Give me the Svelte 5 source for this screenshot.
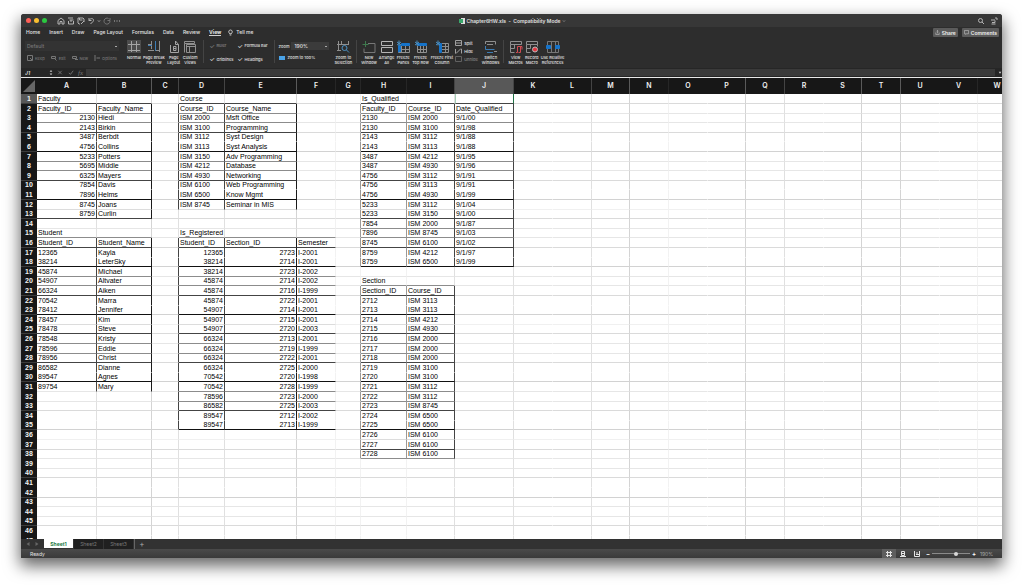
<script>
  let zoom = $state('190%')
  let style = $state('Default')
  let sheet = $state('Sheet1')
  let slider = $state(66)

  const menus = ['Home', 'Insert', 'Draw', 'Page Layout', 'Formulas', 'Data', 'Review', 'View']

  const columns = [
    { name: 'A', size: 'w60', line: 'mid' },
    { name: 'B', size: 'w55', line: 'dark' },
    { name: 'C', size: 'w27', line: 'mid' },
    { name: 'D', size: 'w46', line: 'mid' },
    { name: 'E', size: 'w72', line: 'dark' },
    { name: 'F', size: 'w39', line: 'faint' },
    { name: 'G', size: 'w25', line: 'faint' },
    { name: 'H', size: 'w46', line: 'faint' },
    { name: 'I', size: 'w48', line: 'mid' },
    { name: 'J', size: 'w59', line: 'mid' },
    { name: 'K', size: 'w39', line: 'none' },
    { name: 'L', size: 'w39', line: 'mid' },
    { name: 'M', size: 'w38', line: 'dark' },
    { name: 'N', size: 'w39', line: 'faint' },
    { name: 'O', size: 'w39', line: 'none' },
    { name: 'P', size: 'w38', line: 'dark' },
    { name: 'Q', size: 'w39', line: 'mid' },
    { name: 'R', size: 'w39', line: 'none' },
    { name: 'S', size: 'w38', line: 'dark' },
    { name: 'T', size: 'w39', line: 'dark' },
    { name: 'U', size: 'w39', line: 'none' },
    { name: 'V', size: 'w38', line: 'faint' },
    { name: 'W', size: 'w39', line: 'none' }
  ]

  // weight of the line under each row, repeats every 12 rows
  const weights = ['faint', 'dark', 'mid', 'mid', 'dark', 'none', 'black', 'mid', 'mid', 'dark', 'none', 'black']

  const blocks = [
    {
      title: 'Faculty', row: 1, col: 0, numeric: [0], edges: ['e-dark', 'e-black'],
      head: ['Faculty_ID', 'Faculty_Name'],
      rows: ['2130|Hiedi', '2143|Birkin', '3487|Berbdt', '4756|Collins', '5233|Potters', '5695|Middle', '6325|Mayers', '7854|Davis', '7896|Helms', '8745|Joans', '8759|Curlin']
    },
    {
      title: 'Course', row: 1, col: 3, numeric: [], left: 'e-dark', edges: ['e-dark', 'e-black'],
      head: ['Course_ID', 'Course_Name'],
      rows: ['ISM 2000|Msft Office', 'ISM 3100|Programming', 'ISM 3112|Syst Design', 'ISM 3113|Syst Analysis', 'ISM 3150|Adv Programming', 'ISM 4212|Database', 'ISM 4930|Networking', 'ISM 6100|Web Programming', 'ISM 6500|Know Mgmt', 'ISM 8745|Seminar in MIS']
    },
    {
      title: 'Is_Qualified', row: 1, col: 7, numeric: [], left: 'e-soft', edges: ['e-soft', 'e-dark', 'e-dark'],
      head: ['Faculty_ID', 'Course_ID', 'Date_Qualified'],
      rows: ['2130|ISM 2000|9/1/00', '2130|ISM 3100|9/1/98', '2143|ISM 3112|9/1/88', '2143|ISM 3113|9/1/88', '3487|ISM 4212|9/1/95', '3487|ISM 4930|9/1/96', '4756|ISM 3112|9/1/91', '4756|ISM 3113|9/1/91', '4756|ISM 4930|9/1/99', '5233|ISM 3112|9/1/04', '5233|ISM 3150|9/1/00', '7854|ISM 2000|9/1/87', '7896|ISM 8745|9/1/03', '8745|ISM 6100|9/1/02', '8759|ISM 4212|9/1/97', '8759|ISM 6500|9/1/99']
    },
    {
      title: 'Student', row: 15, col: 0, numeric: [], open: true, edges: ['e-dark', 'e-black'],
      head: ['Student_ID', 'Student_Name'],
      rows: ['12365|Kayla', '38214|LeterSky', '45874|Michael', '54907|Altvater', '66324|Aiken', '70542|Marra', '78412|Jennifer', '78457|Kim', '78478|Steve', '78548|Kristy', '78596|Eddie', '78956|Christ', '86582|Dianne', '89547|Agnes', '89754|Mary']
    },
    {
      title: 'Is_Registered', row: 15, col: 3, numeric: [0, 1], left: 'e-dark', edges: ['e-dark', 'e-black', ''],
      head: ['Student_ID', 'Section_ID', 'Semester'],
      rows: ['12365|2723|I-2001', '38214|2714|I-2001', '38214|2723|I-2002', '45874|2714|I-2002', '45874|2716|I-1999', '45874|2722|I-2001', '54907|2714|I-2001', '54907|2715|I-2001', '54907|2720|I-2003', '66324|2713|I-2001', '66324|2719|I-1999', '66324|2722|I-2001', '66324|2725|I-2000', '70542|2720|I-1998', '70542|2728|I-1999', '78596|2723|I-2000', '86582|2725|I-2003', '89547|2712|I-2002', '89547|2713|I-1999']
    },
    {
      title: 'Section', row: 20, col: 7, numeric: [], left: 'e-soft', edges: ['e-soft', 'e-dark'],
      head: ['Section_ID', 'Course_ID'],
      rows: ['2712|ISM 3113', '2713|ISM 3113', '2714|ISM 4212', '2715|ISM 4930', '2716|ISM 2000', '2717|ISM 2000', '2718|ISM 2000', '2719|ISM 3100', '2720|ISM 3100', '2721|ISM 3112', '2722|ISM 3112', '2723|ISM 8745', '2724|ISM 6500', '2725|ISM 6500', '2726|ISM 6100', '2727|ISM 6100', '2728|ISM 6100']
    }
  ]

  const cells = {}

  function put(row, col, value) {
    const key = row + ':' + col
    cells[key] = { text: '', cls: '', ...cells[key] }
    cells[key].text = value.text ?? cells[key].text
    cells[key].cls += ' ' + value.cls
  }

  for (const b of blocks) {
    b.head.forEach((_, i) => put(b.row, b.col + i, { text: i === 0 ? b.title : '', cls: 'boxed' }))
    const all = [b.head, ...b.rows.map(r => r.split('|'))]
    all.forEach((line, n) => {
      const row = b.row + 1 + n
      const last = n === all.length - 1
      line.forEach((text, i) => {
        let cls = b.edges[i]
        if (!(last && b.open)) cls += ' boxed'
        if (n > 0 && b.numeric.includes(i)) cls += ' num'
        put(row, b.col + i, { text, cls })
      })
      if (b.left) put(row, b.col - 1, { cls: b.left })
    })
  }

  const rowNumbers = Array.from({ length: 47 }, (_, i) => i + 1)

  // each part: [path, stroke, fill]
  const g = '#8f8f8f'
  const blue = '#1673c9'
  const light = '#4a90c4'
  const icons = {
    normal: [['M4.500 1v11M9.500 1v11M1 4.500h12M1 10.500h12', '#a4a4a4']],
    breaks: [['M1 4.500h4M4.500 1v8M9 10.500h4M1 10.500h6M12.500 1v11', g], ['M8.500 1v10M1 5.500h4', '#3d7db5']],
    page: [['M3.500 5v7.500h8V4.500L8.500 1v3.500h3M6.500 6.500v4h2.500v-4zM6.500 8.500h2.500', '#a4a4a4']],
    custom: [['M1.500 1.500h10v2h-10zM1.500 3.500v9M3.500 4.500h9v8h-9zM3.500 6.500h9M6.500 6.500v6', g]],
    zoomsel: [['M2.500 1v10M5.500 1v3M1 4.500h12M1 10.500h4M12.500 1v4', g], ['M11 8a2.500 2.500 0 1 1-5 0a2.500 2.500 0 0 1 5 0M10.500 10l2.500 2.500', light]],
    newwin: [['M6 3.500h7v9h-11v-4', '#777'], ['M3.500 1v6M0.500 4.500h6', '#3f7a4e']],
    arrange: [['M1.500 1.500h11v4h-11zM1.500 7.500h11v5h-11z', '#b4b4b4']],
    panes: [['M5.500 3.500h8v2h-8zM2.500 5.500h2v7h-2z', blue, blue], ['M5.500 6v6.500M9.500 6v6.500M5 9.500h8.500M13.500 6v6.500h-11', g], ['M1 2l4 3M1 5l4-3M3 0.500v5', light]],
    toprow: [['M3.500 3.500h9v2h-9z', blue, blue], ['M3.500 6v6.500h9v-6.500M6.500 6v6.500M9.500 6v6.500M3 9.500h10', g], ['M1 2l4 3M1 5l4-3M3 0.500v5', light]],
    firstcol: [['M4.500 3.500h2v9h-2z', blue, blue], ['M7 3.500h6.500v9h-6.500M10.500 3.500v9M7 6.500h6.500M7 9.500h6.500', g], ['M1 2l4 3M1 5l4-3M3 0.500v5', light]],
    switch: [['M1.500 4v-2.500h10v3M3 4.500h6M10 11.500h3', g], ['M1.500 6v3.500h9M3 12.500h6', '#3d7db5']],
    macros: [['M1.500 1.500h11v3h-11zM1.500 4.500v8h4M5.500 4.500v4M1.500 8.500h4', g], ['M7 12.500h1.500v-6h4.500v3M11.500 6.500v6h-2', '#d14b52']],
    record: [['M1.500 1.500h11v3h-11zM1.500 4.500v8h4M5.500 4.500v4M1.500 8.500h4M12.500 4.500v2', g], ['M12.500 9.500a2.500 2.500 0 1 1-5 0a2.500 2.500 0 0 1 5 0', '#b9b9b9', '#e2353f']],
    relative: [['M1.500 1.500h11v11h-11zM5.500 1.500v11M9.500 1.500v11', '#777'], ['M0.500 5.500h4v3h-4zM9.500 5.500h4v3h-4z', blue, blue]]
  }
</script>

{#snippet tool(name, top, bottom = '', on = false)}
  <button class="tool" class:on>
    <svg viewBox="0 0 14 13">
      {#each icons[name] as [d, stroke, fill]}
        <path {d} {stroke} fill={fill ?? 'none'} />
      {/each}
    </svg>
    <span>{top}</span>
    <span>{bottom}</span>
  </button>
{/snippet}

<div class="window">
  <header class="titlebar">
    <div class="quick">
      <div class="lights"><i class="red"></i><i class="yellow"></i><i class="green"></i></div>
      <svg viewBox="0 0 8 8"><path d="M1 3.500L4 1l3 2.500V7H5V4.500H3V7H1z" /></svg>
      <svg viewBox="0 0 8 8"><path d="M1 1h5M2.500 3h4M1.500 4v3h5V4M4 3v2" /></svg>
      <svg viewBox="0 0 8 8"><path d="M1 1h5l1 1v3M1 1v5l1 1h1M2.500 1v2h3M4 7l3-3" /></svg>
      <svg viewBox="0 0 8 8"><path d="M2 1v2.500h2.500M2 3.500C4 0 8 2 6 4.500L3.500 7" /></svg>
      <svg class="chev" viewBox="0 0 4 8"><path d="M1 3.500l1 1l1-1" /></svg>
      <svg class="dim" viewBox="0 0 8 8"><path d="M5.500 1.500A3 3 0 1 0 7 4M7 1v2.500H4.500" /></svg>
      <svg viewBox="0 0 8 8"><path d="M1 4h1M3.500 4h1M6 4h1" /></svg>
    </div>
    <div class="doc">
      <svg viewBox="0 0 8 8"><path d="M3 1h4v6H3z" fill="#ddd" stroke="none" /><path d="M1 2h4v4H1z" fill="#3aa66b" stroke="none" /></svg>
      <span>Chapter6HW.xls&nbsp; -&nbsp; Compatibility Mode</span>
      <svg class="chev dim" viewBox="0 0 4 8"><path d="M1 3.500l1 1l1-1" /></svg>
    </div>
    <div class="corner">
      <svg viewBox="0 0 8 8"><path d="M5.500 3.500a2 2 0 1 1-4 0a2 2 0 0 1 4 0M5 5l2 2" /></svg>
      <svg viewBox="0 0 8 8"><path d="M1 3h4M2 5.500h3M1.500 7h4M5 1h2v2M5 3.500v2" /></svg>
    </div>
  </header>

  <nav class="menu">
    {#each menus as item}
      <a href="#{item}" class:active={item === 'View'}>{item}</a>
    {/each}
    <a href="#tell" class="tell">
      <svg viewBox="0 0 6 8"><path d="M2 5.500C0 3 1 1 3 1s3 2 1 4.500zM2 7h2" /></svg>
      Tell me
    </a>
    <div class="share">
      <button><svg viewBox="0 0 6 6"><path d="M1 3v2.500h4V3M3 4V0.500M2 1.500l1-1l1 1" /></svg>Share</button>
      <button><svg viewBox="0 0 6 6"><path d="M0.500 0.500h5v4H3l-1 1v-1H0.500z" /></svg>Comments</button>
    </div>
  </nav>

  <div class="ribbon">
    <div class="views">
      <select bind:value={style} aria-label="Sheet view"><option>Default</option></select>
      <div class="viewrow">
        <button><svg viewBox="0 0 6 6"><path d="M0.500 0.500h5v5h-5zM3 3l2 2" /></svg>Keep</button>
        <button><svg viewBox="0 0 6 6"><path d="M0.500 1.500h4v2h-4zM3 3l2.500 2.500" /></svg>Exit</button>
        <button><svg viewBox="0 0 6 6"><path d="M0.500 1.500h4v2h-4zM3 4.500h3" /></svg>New</button>
        <button><svg viewBox="0 0 6 6"><path d="M1 0v6M2.500 3H6" /></svg>Options</button>
      </div>
    </div>
    <div class="tools">
      {@render tool('normal', 'Normal', '', true)}
      {@render tool('breaks', 'Page Break', 'Preview')}
      {@render tool('page', 'Page', 'Layout')}
      {@render tool('custom', 'Custom', 'Views')}
    </div>
    <div class="checks">
      <label class="off"><input type="checkbox" checked disabled />Ruler</label>
      <label><input type="checkbox" checked />Formula Bar</label>
      <label><input type="checkbox" checked />Gridlines</label>
      <label><input type="checkbox" checked />Headings</label>
    </div>
    <div class="zoom">
      <label>Zoom
        <select bind:value={zoom}><option>190%</option><option>100%</option></select>
      </label>
      <button onclick={() => (zoom = '100%')}><i></i>Zoom to 100%</button>
    </div>
    <div class="tools">
      {@render tool('zoomsel', 'Zoom to', 'Selection')}
    </div>
    <div class="tools ruled">
      {@render tool('newwin', 'New', 'Window')}
      {@render tool('arrange', 'Arrange', 'All')}
      {@render tool('panes', 'Freeze', 'Panes')}
      {@render tool('toprow', 'Freeze', 'Top Row')}
      {@render tool('firstcol', 'Freeze First', 'Column')}
      <div class="stack">
        <button><svg viewBox="0 0 7 6"><path d="M0.500 0.500h6v5h-6zM0.500 3h6" /></svg>Split</button>
        <button><svg viewBox="0 0 7 6"><path d="M0.500 1v4.500M1 5.500l5-5M6.500 1v4.500" /></svg>Hide</button>
        <button class="off"><svg viewBox="0 0 7 6"><path d="M0.500 0.500h6v5h-6z" /></svg>Unhide</button>
      </div>
      {@render tool('switch', 'Switch', 'Windows')}
    </div>
    <div class="tools ruled">
      {@render tool('macros', 'View', 'Macros')}
      {@render tool('record', 'Record', 'Macro')}
      {@render tool('relative', 'Use Relative', 'References')}
    </div>
  </div>

  <div class="formula">
    <input class="name" value="J1" aria-label="Name box" />
    <svg class="step" viewBox="0 0 4 8"><path d="M0.500 3L2 1l1.500 2zM0.500 5L2 7l1.500-2z" /></svg>
    <svg viewBox="0 0 8 8"><path d="M2 2l4 4M6 2L2 6" /></svg>
    <svg viewBox="0 0 8 8"><path d="M1.500 4.500l2 1.500l3-4" /></svg>
    <em>fx</em>
    <input class="content" aria-label="Formula" />
    <svg class="drop" viewBox="0 0 4 8"><path d="M0.500 3h3L2 5.500z" /></svg>
  </div>

  <main class="sheet">
    <table>
      <thead>
        <tr>
          <th class="corner-cell w16"><svg viewBox="0 0 14 13"><path d="M13 0v12H1z" /></svg></th>
          {#each columns as c}
            <th class="{c.size} h-{c.line}" class:picked={c.name === 'J'}>{c.name}</th>
          {/each}
        </tr>
      </thead>
      <tbody>
        {#each rowNumbers as r}
          <tr class="b-{weights[r % 12]}">
            <th class:picked={r === 1}>{r}</th>
            {#each columns as c, i}
              {@const cell = cells[r + ':' + i]}
              <td class="v-{c.line} {cell?.cls ?? ''}" class:selected={r === 1 && c.name === 'J'}>{cell?.text ?? ''}</td>
            {/each}
          </tr>
        {/each}
      </tbody>
    </table>
  </main>

  <div class="tabs">
    <button class="arrow" aria-label="Previous sheet"><svg viewBox="0 0 4 4"><path d="M3.500 0v4L0.500 2z" /></svg></button>
    <button class="arrow" aria-label="Next sheet"><svg viewBox="0 0 4 4"><path d="M0.500 0v4L3.500 2z" /></svg></button>
    {#each ['Sheet1', 'Sheet2', 'Sheet3'] as s}
      <button class="tab" class:current={sheet === s} onclick={() => (sheet = s)}>{s}</button>
    {/each}
    <button class="add">+</button>
  </div>

  <footer class="status">
    <span class="ready">Ready</span>
    <button class="mode on" aria-label="Normal view"><svg viewBox="0 0 6 6"><path d="M1.500 0v6M4.500 0v6M0 1.500h6M0 4.500h6" /></svg></button>
    <button class="mode" aria-label="Page layout view"><svg viewBox="0 0 6 6"><path d="M1.500 0.500h3v4h-3zM0 5.500h6M1.500 2.500h3" /></svg></button>
    <button class="mode" aria-label="Page break view"><svg viewBox="0 0 6 6"><path d="M0.500 0v5.500h5V0M3 1v2M2 3.500h3" /></svg></button>
    <button class="sign">−</button>
    <input type="range" min="0" max="100" bind:value={slider} aria-label="Zoom level" />
    <button class="sign">+</button>
    <span class="level">190%</span>
  </footer>
</div>

<style>
  :global(body) {
    background: #fff;
    margin: 0;
  }

  .window {
    box-sizing: border-box;
    height: calc(100vh - 42px);
    margin: 14px 22px 28px 21px;
    display: flex;
    flex-direction: column;
    overflow: hidden;
    border-radius: 3px 3px 1px 1px;
    background: #2d2d2d;
    color: #e4e4e4;
    font-family: Inter, 'Liberation Sans', sans-serif;
    font-size: 5px;
    line-height: 6px;
    box-shadow: 0 7px 16px 1px rgba(0, 0, 0, 0.6);
  }

  button,
  input,
  select {
    box-sizing: border-box;
    margin: 0;
    padding: 0;
    border: none;
    background: none;
    color: inherit;
    font: inherit;
    appearance: none;
  }

  svg {
    display: block;
    flex: none;
    fill: none;
    stroke: currentColor;
  }

  .titlebar {
    height: 13px;
    flex: none;
    display: grid;
    grid-template-columns: 1fr auto 1fr;
    align-items: center;
    background: #373737;
    color: #b4b4b4;
  }

  .titlebar svg {
    width: 8px;
    height: 8px;
  }

  .titlebar svg.chev {
    width: 4px;
  }

  .quick {
    display: flex;
    align-items: center;
    gap: 2px;
    padding-left: 5px;
  }

  .lights {
    display: flex;
    gap: 3px;
    margin-right: 8px;
  }

  .lights i {
    width: 5px;
    height: 5px;
    border-radius: 50%;
  }

  .red { background: #ff5f57; }
  .yellow { background: #f8be30; }
  .green { background: #2bc840; }

  .dim {
    opacity: 0.5;
  }

  .doc {
    display: flex;
    align-items: center;
    gap: 1px;
    color: #e0e0e0;
    font-weight: 600;
  }

  .corner {
    display: flex;
    justify-content: flex-end;
    gap: 5px;
    padding-right: 4px;
  }

  .menu {
    height: 11px;
    flex: none;
    display: flex;
    align-items: center;
    gap: 9px;
    padding: 0 3px 0 5px;
    font-weight: 500;
  }

  .menu a {
    color: inherit;
    text-decoration: none;
    border-bottom: 1px solid transparent;
  }

  .menu a.active {
    font-weight: 700;
    border-bottom-color: #d0d0d0;
  }

  .menu .tell {
    display: flex;
    gap: 3px;
    margin-left: -2px;
  }

  .tell svg {
    width: 5px;
    height: 7px;
  }

  .share {
    margin-left: auto;
    display: flex;
    gap: 4px;
  }

  .share button {
    display: flex;
    align-items: center;
    gap: 2px;
    height: 9px;
    padding: 0 2px;
    border-radius: 1px;
    background: #5b5b5b;
    color: #f0f0f0;
    font-weight: 600;
  }

  .share svg {
    width: 5px;
    height: 5px;
    color: #aaa;
  }

  .ribbon {
    height: 30px;
    flex: none;
    display: flex;
    align-items: flex-start;
    padding-left: 4px;
    font-size: 4px;
    line-height: 5px;
    font-weight: 500;
  }

  .views {
    width: 94px;
    margin-right: 8px;
    color: #777;
  }

  .views select {
    width: 100%;
    height: 10px;
    margin-top: 3px;
    padding-left: 2px;
    background: #333;
    font-size: 5px;
    line-height: 10px;
  }

  .viewrow {
    display: flex;
    justify-content: space-between;
    padding: 4px 2px 0 2px;
  }

  .viewrow button {
    display: flex;
    align-items: center;
    gap: 2px;
  }

  .viewrow svg {
    width: 6px;
    height: 6px;
  }

  .tools {
    display: flex;
    gap: 2px;
    padding-top: 2px;
  }

  .ruled {
    height: 23px;
    margin: 2px 0 0 4px;
    padding: 0 0 0 4px;
    border-left: 1px solid #444;
  }

  .tool {
    display: flex;
    flex-direction: column;
    align-items: center;
    white-space: nowrap;
  }

  .tool svg {
    width: 14px;
    height: 13px;
    margin-bottom: 2px;
  }

  .tool.on svg {
    background: #4c4c4c;
  }

  .tool span {
    min-height: 5px;
  }

  .stack {
    display: flex;
    flex-direction: column;
    gap: 2px;
    padding-right: 2px;
  }

  .stack button {
    display: flex;
    align-items: center;
    gap: 2px;
  }

  .stack svg {
    width: 7px;
    height: 6px;
    color: #a0a0a0;
  }

  .off {
    opacity: 0.45;
  }

  .checks {
    display: grid;
    grid-template-columns: 24px auto;
    gap: 7px 4px;
    height: 20px;
    margin: 2px 0 0 5px;
    padding: 3px 6px 0 6px;
    border-left: 1px solid #444;
    border-right: 1px solid #444;
  }

  .checks label {
    display: flex;
    align-items: center;
    gap: 3px;
    height: 5px;
    white-space: nowrap;
  }

  .checks input {
    width: 4px;
    height: 4px;
  }

  .checks input:checked::before {
    content: '✓';
    display: block;
    font-size: 6px;
    line-height: 4px;
  }

  .zoom {
    display: flex;
    flex-direction: column;
    gap: 5px;
    padding: 4px 5px 0 4px;
  }

  .zoom label {
    display: flex;
    align-items: center;
    gap: 2px;
  }

  .zoom select {
    width: 38px;
    height: 8px;
    padding-left: 3px;
    background: #3b3b3b;
    font-size: 5px;
    line-height: 8px;
  }

  .views select,
  .zoom select {
    background-image: linear-gradient(#aaa, #aaa);
    background-size: 2px 1px;
    background-position: right 2px center;
    background-repeat: no-repeat;
  }

  .zoom button {
    display: flex;
    align-items: center;
    gap: 3px;
  }

  .zoom i {
    width: 6px;
    height: 4px;
    background: #4aa3e8;
  }

  .formula {
    height: 9px;
    flex: none;
    display: flex;
    align-items: center;
    gap: 3px;
    padding-left: 4px;
    background: #262626;
    border-bottom: 1px solid #e8e8e8;
    color: #777;
  }

  .formula svg {
    width: 8px;
    height: 7px;
  }

  .formula .step,
  .formula .drop {
    width: 4px;
    stroke: none;
    fill: #ccc;
  }

  .name {
    width: 21px;
    color: #e4e4e4;
    font-weight: 600;
    font-style: italic;
  }

  .formula em {
    font-family: 'Liberation Serif', serif;
    font-size: 7px;
  }

  .content {
    flex: 1;
    height: 7px;
    background: #3a3a3a;
    color: #e4e4e4;
  }

  .sheet {
    flex: 1;
    min-height: 0;
    overflow: hidden;
    background: #fff;
    color: #000;
  }

  table {
    width: 995px;
    table-layout: fixed;
    border-collapse: separate;
    border-spacing: 0;
    font-family: 'Liberation Sans', Arial, sans-serif;
    font-size: 7px;
    line-height: 8px;
  }

  th,
  td {
    box-sizing: border-box;
    padding: 0 1px;
    white-space: nowrap;
  }

  th {
    background: #171717;
    color: #f2f2f2;
    text-align: center;
  }

  thead th {
    height: 16px;
    border-right: 1px solid #171717;
    font-family: Inter, sans-serif;
    font-weight: 600;
  }

  thead .h-dark { border-right-color: #5a5a5a; }
  thead .h-mid { border-right-color: #444; }
  thead .h-faint { border-right-color: #262626; }

  .corner-cell svg {
    width: 14px;
    height: 13px;
    fill: #666;
    stroke: none;
  }

  tbody tr { height: 10px; }
  tbody tr:nth-child(5n + 3),
  tbody tr:nth-child(5n) { height: 9px; }

  tbody th {
    border-bottom: 1px solid #171717;
  }

  tbody .b-black th,
  tbody .b-dark th { border-bottom-color: #3c3c3c; }

  th.picked {
    background: #585858;
  }

  td {
    border-right: 1px solid #fff;
    border-bottom: 1px solid #fff;
  }

  .v-dark { border-right-color: #d4d4d4; }
  .v-mid { border-right-color: #e0e0e0; }
  .v-faint { border-right-color: #f2f2f2; }

  .b-black td { border-bottom-color: #d2d2d2; }
  .b-dark td { border-bottom-color: #dadada; }
  .b-mid td { border-bottom-color: #e6e6e6; }
  .b-faint td { border-bottom-color: #f0f0f0; }

  .b-black .boxed { border-bottom-color: #111; }
  .b-dark .boxed { border-bottom-color: #444; }
  .b-mid .boxed { border-bottom-color: #8c8c8c; }
  .b-faint .boxed { border-bottom-color: #dcdcdc; }

  .e-black { border-right-color: #1a1a1a; }
  .e-dark { border-right-color: #444; }
  .e-soft { border-right-color: #999; }

  .num {
    text-align: right;
  }

  td.selected {
    border-right-color: #1f7446;
    border-bottom-color: #7fb596;
    border-left: 1px solid #a5cdb5;
  }

  .tabs {
    height: 10px;
    flex: none;
    display: flex;
    align-items: stretch;
    background: #323232;
    color: #777;
  }

  .arrow {
    width: 9px;
    display: flex;
    align-items: center;
    justify-content: flex-end;
  }

  .arrow svg {
    width: 4px;
    height: 4px;
    fill: #666;
    stroke: none;
  }

  .tab {
    width: 30px;
    background: #202020;
    border-right: 1px solid #333;
  }

  .arrow + .tab {
    margin-left: 5px;
  }

  .tab.current {
    height: 9px;
    background: #fff;
    color: #1e7b48;
    font-weight: 700;
  }

  .add {
    width: 15px;
    font-size: 8px;
    color: #aaa;
    border-left: 1px solid #666;
  }

  .status {
    height: 9px;
    flex: none;
    display: flex;
    align-items: center;
    padding: 0 7px 0 9px;
    background: linear-gradient(#4a4a4a, #3a3a3a);
  }

  .ready {
    margin-right: auto;
  }

  .mode {
    width: 14px;
    height: 9px;
    display: flex;
    align-items: center;
    justify-content: center;
  }

  .mode.on {
    background: #5e5e5e;
  }

  .mode svg {
    width: 6px;
    height: 6px;
  }

  .sign {
    width: 8px;
    color: #fff;
    font-size: 6px;
    font-weight: 700;
  }

  .status input {
    width: 38px;
    height: 5px;
    background: linear-gradient(#8a8a8a, #8a8a8a) center / 100% 1px no-repeat;
  }

  .status input::-webkit-slider-thumb {
    appearance: none;
    width: 4px;
    height: 4px;
    border-radius: 50%;
    background: #d8d8d8;
  }

  .level {
    width: 17px;
    text-align: center;
    color: #aaa;
  }

  .w16 { width: 16px; }
  .w25 { width: 25px; }
  .w27 { width: 27px; }
  .w38 { width: 38px; }
  .w39 { width: 39px; }
  .w46 { width: 46px; }
  .w48 { width: 48px; }
  .w55 { width: 55px; }
  .w59 { width: 59px; }
  .w60 { width: 60px; }
  .w72 { width: 72px; }
</style>
